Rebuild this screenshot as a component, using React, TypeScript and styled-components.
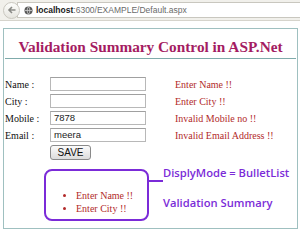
import React from "react"
import styled, { createGlobalStyle } from "styled-components"

const GlobalStyle = createGlobalStyle`
  html, body {
    margin: 0;
    padding: 0;
    background: #ffffff;
  }
`

const Page = styled.div`
  width: 300px;
  height: 232px;
  overflow: hidden;
  background: #ffffff;
  display: flex;
  flex-direction: column;
`

const Toolbar = styled.div`
  height: 21px;
  background: #f1f0eb;
  border-bottom: 1px solid #d6d4cc;
  display: flex;
  align-items: center;
  padding: 0 0 0 3px;
  box-sizing: border-box;
`

const BackButton = styled.div`
  width: 17px;
  height: 17px;
  border-radius: 50%;
  border: 1px solid #c9c7bf;
  background: linear-gradient(#fdfdfb, #e6e5df);
  display: flex;
  align-items: center;
  justify-content: center;
  box-sizing: border-box;
  z-index: 1;
`

const UrlBar = styled.div`
  flex: 1;
  height: 16px;
  margin-left: -3px;
  background: #ffffff;
  border: 1px solid #c9c7bf;
  border-right: none;
  display: flex;
  align-items: center;
  padding-left: 6px;
  box-sizing: border-box;
  font-family: "Liberation Sans", Arial, sans-serif;
  font-size: 8.5px;
  color: #6a6a6a;
  gap: 3px;
  white-space: nowrap;
`

const Host = styled.span`
  color: #222;
  font-weight: bold;
`

const Panel = styled.div`
  margin: 7px 2px 0 3px;
  height: 199px;
  border: 1px solid #9fc0c0;
  display: flex;
  flex-direction: column;
`

const Title = styled.h1`
  margin: 0 1px;
  padding: 7px 0 1px 0;
  height: 21px;
  text-align: center;
  white-space: nowrap;
  font-family: "Liberation Serif", "Times New Roman", serif;
  font-weight: bold;
  font-size: 15.3px;
  line-height: 21px;
  color: #a41c62;
  border-bottom: 1px solid #7fabab;
`

const Form = styled.div`
  margin-top: 18px;
  display: grid;
  grid-template-columns: 45px 96px 124px;
  row-gap: 3px;
  padding-left: 1px;
  align-items: center;
  font-family: "Liberation Serif", "Times New Roman", serif;
  font-size: 10px;
`

const Label = styled.span`
  color: #111;
`

const Input = styled.div`
  height: 14px;
  border: 1px solid #b8b8b8;
  border-top-color: #a0a0a0;
  box-sizing: border-box;
  font-family: "Liberation Sans", Arial, sans-serif;
  font-size: 9.5px;
  line-height: 12px;
  padding-left: 3px;
  color: #222;
`

const ErrorText = styled.span`
  color: #b22a2a;
  padding-left: 29px;
  white-space: nowrap;
`

const SaveButton = styled.div`
  grid-column: 2;
  width: 41px;
  height: 15px;
  border: 1px solid #8a8a8a;
  border-radius: 3px;
  background: linear-gradient(#fbfbfb, #dcdcdc);
  box-sizing: border-box;
  font-family: "Liberation Sans", Arial, sans-serif;
  font-size: 10px;
  font-weight: 500;
  line-height: 13px;
  text-align: center;
  color: #111;
`

const SummaryRow = styled.div`
  margin-top: 9px;
  padding-left: 40px;
  display: flex;
  align-items: flex-start;
`

const SummaryBox = styled.div`
  width: 105px;
  height: 52px;
  border: 2px solid #7b2bd8;
  border-radius: 8px;
  box-sizing: border-box;
`

const BulletList = styled.ul`
  margin: 18px 0 0 0;
  padding-left: 30px;
  font-family: "Liberation Serif", "Times New Roman", serif;
  font-size: 10px;
  line-height: 13px;
  color: #b22a2a;
  list-style: disc;
`

const Annotation = styled.div`
  display: flex;
  align-items: flex-start;
`

const Tick = styled.span`
  width: 14px;
  height: 2px;
  background: #7b2bd8;
  margin-top: 11px;
  flex-shrink: 0;
`

const AnnotationText = styled.div`
  display: flex;
  flex-direction: column;
  gap: 14px;
  margin-top: -4px;
  font-family: "Open Sans", "Liberation Sans", sans-serif;
  font-weight: 600;
  font-size: 11.2px;
  line-height: 16px;
  color: #7b2bd8;
  white-space: nowrap;
`

const fields = [
  { label: "Name :", value: "", error: "Enter Name !!" },
  { label: "City :", value: "", error: "Enter City !!" },
  { label: "Mobile :", value: "7878", error: "Invalid Mobile no !!" },
  { label: "Email :", value: "meera", error: "Invalid Email Address !!" },
]

export default function App() {
  return (
    <>
      <GlobalStyle />
      <Page>
        <Toolbar>
          <BackButton>
            <svg width="10" height="10" viewBox="0 0 10 10">
              <path d="M8.5 5H2.5M5 2L2 5L5 8" stroke="#8a8a86" strokeWidth="1.6" fill="none" />
            </svg>
          </BackButton>
          <UrlBar>
            <svg width="9" height="9" viewBox="0 0 10 10">
              <circle cx="5" cy="5" r="4.5" fill="#5a5a5a" />
              <path d="M1 5h8M5 0.8c-2 2.4-2 6 0 8.4M5 0.8c2 2.4 2 6 0 8.4" stroke="#dcdcdc" strokeWidth="0.8" fill="none" />
            </svg>
            <span>
              <Host>localhost</Host>:6300/EXAMPLE/Default.aspx
            </span>
          </UrlBar>
        </Toolbar>
        <Panel>
          <Title>Validation Summary Control in ASP.Net</Title>
          <Form>
            {fields.map((f) => (
              <React.Fragment key={f.label}>
                <Label>{f.label}</Label>
                <Input>{f.value}</Input>
                <ErrorText>{f.error}</ErrorText>
              </React.Fragment>
            ))}
            <SaveButton>SAVE</SaveButton>
          </Form>
          <SummaryRow>
            <SummaryBox>
              <BulletList>
                <li>Enter Name !!</li>
                <li>Enter City !!</li>
              </BulletList>
            </SummaryBox>
            <Annotation>
              <Tick />
              <AnnotationText>
                <span>DisplyMode = BulletList</span>
                <span>Validation Summary</span>
              </AnnotationText>
            </Annotation>
          </SummaryRow>
        </Panel>
      </Page>
    </>
  )
}
